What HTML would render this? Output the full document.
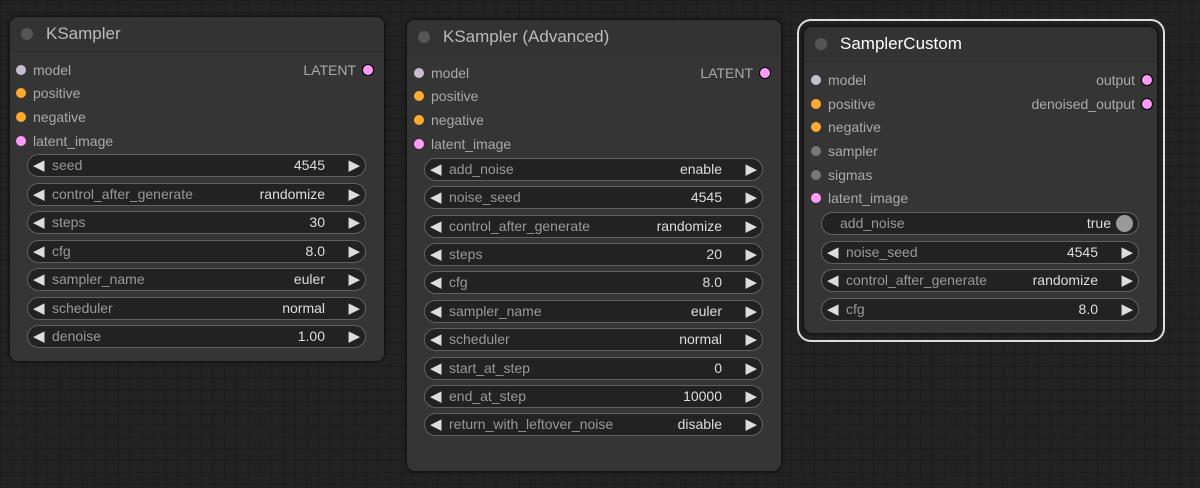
<!DOCTYPE html><html><head><style>
body{margin:0;width:1200px;height:488px;overflow:hidden;background-color:#232323;
background-image:linear-gradient(#1c1c1c 1px,transparent 1px),linear-gradient(90deg,#1c1c1c 1px,transparent 1px);
background-size:11.8px 11.8px;font-family:"Liberation Sans",sans-serif;position:relative}
.n{position:absolute;background:#353535;border-radius:8px;box-shadow:0 0 4px #000}
.t{height:34px;background:#333;border-bottom:1px solid #2e2e2e;border-radius:8px 8px 0 0;color:#bbb;font-size:17px;line-height:34px;padding-left:36px;position:relative}
.t:before{content:"";position:absolute;left:11px;top:11px;width:12px;height:12px;border-radius:50%;background:#555}
.r{position:absolute;font-size:14px;color:#aaa;height:18px;line-height:18px}
.d{position:absolute;width:10px;height:10px;border-radius:50%;top:4px}
.w{position:absolute;height:23px;background:#222;border:1px solid #616161;border-radius:12px;font-size:14px;line-height:21px;color:#999;box-sizing:border-box}
.w .l{position:absolute;left:5px;color:#ddd;font-size:15px}
.w .a{position:absolute;left:24px}
.w .v{position:absolute;right:40px;color:#ddd}
.w .rr{position:absolute;right:5px;color:#ddd;font-size:15px}
</style></head><body>

<!-- node1 -->
<div class="n" style="left:10px;top:17px;width:374px;height:344px">
<div class="t">KSampler</div>
<div class="r" style="left:23px;top:44px"><span class="d" style="left:-17px;background:#c8bdd0"></span>model</div>
<div class="r" style="right:28px;top:44px">LATENT<span class="d" style="right:-18px;background:#ff9cf9;border:1px solid #000;top:3px"></span></div>
<div class="r" style="left:23px;top:67px"><span class="d" style="left:-17px;background:#ffa931"></span>positive</div>
<div class="r" style="left:23px;top:91px"><span class="d" style="left:-17px;background:#ffa931"></span>negative</div>
<div class="r" style="left:23px;top:115px"><span class="d" style="left:-17px;background:#ff9cf9"></span>latent_image</div>
<div class="w" style="left:17px;top:137px;width:339px"><span class="l">◀</span><span class="a">seed</span><span class="v">4545</span><span class="rr">▶</span></div>
<div class="w" style="left:17px;top:166px;width:339px"><span class="l">◀</span><span class="a">control_after_generate</span><span class="v">randomize</span><span class="rr">▶</span></div>
<div class="w" style="left:17px;top:194px;width:339px"><span class="l">◀</span><span class="a">steps</span><span class="v">30</span><span class="rr">▶</span></div>
<div class="w" style="left:17px;top:223px;width:339px"><span class="l">◀</span><span class="a">cfg</span><span class="v">8.0</span><span class="rr">▶</span></div>
<div class="w" style="left:17px;top:251px;width:339px"><span class="l">◀</span><span class="a">sampler_name</span><span class="v">euler</span><span class="rr">▶</span></div>
<div class="w" style="left:17px;top:280px;width:339px"><span class="l">◀</span><span class="a">scheduler</span><span class="v">normal</span><span class="rr">▶</span></div>
<div class="w" style="left:17px;top:308px;width:339px"><span class="l">◀</span><span class="a">denoise</span><span class="v">1.00</span><span class="rr">▶</span></div>
</div>

<!-- node2 -->
<div class="n" style="left:407px;top:20px;width:374px;height:451px">
<div class="t">KSampler (Advanced)</div>
<div class="r" style="left:24px;top:44px"><span class="d" style="left:-17px;background:#c8bdd0"></span>model</div>
<div class="r" style="right:28px;top:44px">LATENT<span class="d" style="right:-18px;background:#ff9cf9;border:1px solid #000;top:3px"></span></div>
<div class="r" style="left:24px;top:67px"><span class="d" style="left:-17px;background:#ffa931"></span>positive</div>
<div class="r" style="left:24px;top:91px"><span class="d" style="left:-17px;background:#ffa931"></span>negative</div>
<div class="r" style="left:24px;top:115px"><span class="d" style="left:-17px;background:#ff9cf9"></span>latent_image</div>
<div class="w" style="left:17px;top:138px;width:339px"><span class="l">◀</span><span class="a">add_noise</span><span class="v">enable</span><span class="rr">▶</span></div>
<div class="w" style="left:17px;top:166px;width:339px"><span class="l">◀</span><span class="a">noise_seed</span><span class="v">4545</span><span class="rr">▶</span></div>
<div class="w" style="left:17px;top:195px;width:339px"><span class="l">◀</span><span class="a">control_after_generate</span><span class="v">randomize</span><span class="rr">▶</span></div>
<div class="w" style="left:17px;top:223px;width:339px"><span class="l">◀</span><span class="a">steps</span><span class="v">20</span><span class="rr">▶</span></div>
<div class="w" style="left:17px;top:251px;width:339px"><span class="l">◀</span><span class="a">cfg</span><span class="v">8.0</span><span class="rr">▶</span></div>
<div class="w" style="left:17px;top:280px;width:339px"><span class="l">◀</span><span class="a">sampler_name</span><span class="v">euler</span><span class="rr">▶</span></div>
<div class="w" style="left:17px;top:308px;width:339px"><span class="l">◀</span><span class="a">scheduler</span><span class="v">normal</span><span class="rr">▶</span></div>
<div class="w" style="left:17px;top:337px;width:339px"><span class="l">◀</span><span class="a">start_at_step</span><span class="v">0</span><span class="rr">▶</span></div>
<div class="w" style="left:17px;top:365px;width:339px"><span class="l">◀</span><span class="a">end_at_step</span><span class="v">10000</span><span class="rr">▶</span></div>
<div class="w" style="left:17px;top:393px;width:339px"><span class="l">◀</span><span class="a">return_with_leftover_noise</span><span class="v">disable</span><span class="rr">▶</span></div>
</div>

<!-- node3 -->
<div style="position:absolute;left:797px;top:19px;width:364px;height:319px;border:2px solid #ddd;border-radius:14px"></div>
<div class="n" style="left:804px;top:27px;width:353px;height:306px">
<div class="t" style="color:#fff">SamplerCustom</div>
<div class="r" style="left:24px;top:44px"><span class="d" style="left:-17px;background:#c8bdd0"></span>model</div>
<div class="r" style="right:22px;top:44px">output<span class="d" style="right:-18px;background:#ff9cf9;border:1px solid #000;top:3px"></span></div>
<div class="r" style="left:24px;top:68px"><span class="d" style="left:-17px;background:#ffa931"></span>positive</div>
<div class="r" style="right:22px;top:68px">denoised_output<span class="d" style="right:-18px;background:#ff9cf9;border:1px solid #000;top:3px"></span></div>
<div class="r" style="left:24px;top:91px"><span class="d" style="left:-17px;background:#ffa931"></span>negative</div>
<div class="r" style="left:24px;top:115px"><span class="d" style="left:-17px;background:#777"></span>sampler</div>
<div class="r" style="left:24px;top:139px"><span class="d" style="left:-17px;background:#777"></span>sigmas</div>
<div class="r" style="left:24px;top:162px"><span class="d" style="left:-17px;background:#ff9cf9"></span>latent_image</div>
<div class="w" style="left:17px;top:185px;width:318px"><span class="a" style="left:18px">add_noise</span><span class="v" style="right:27px">true</span><span style="position:absolute;right:5px;top:2px;width:17px;height:17px;border-radius:50%;background:#999"></span></div>
<div class="w" style="left:17px;top:214px;width:318px"><span class="l">◀</span><span class="a">noise_seed</span><span class="v">4545</span><span class="rr">▶</span></div>
<div class="w" style="left:17px;top:242px;width:318px"><span class="l">◀</span><span class="a">control_after_generate</span><span class="v">randomize</span><span class="rr">▶</span></div>
<div class="w" style="left:17px;top:271px;width:318px"><span class="l">◀</span><span class="a">cfg</span><span class="v">8.0</span><span class="rr">▶</span></div>
</div>
</body></html>
